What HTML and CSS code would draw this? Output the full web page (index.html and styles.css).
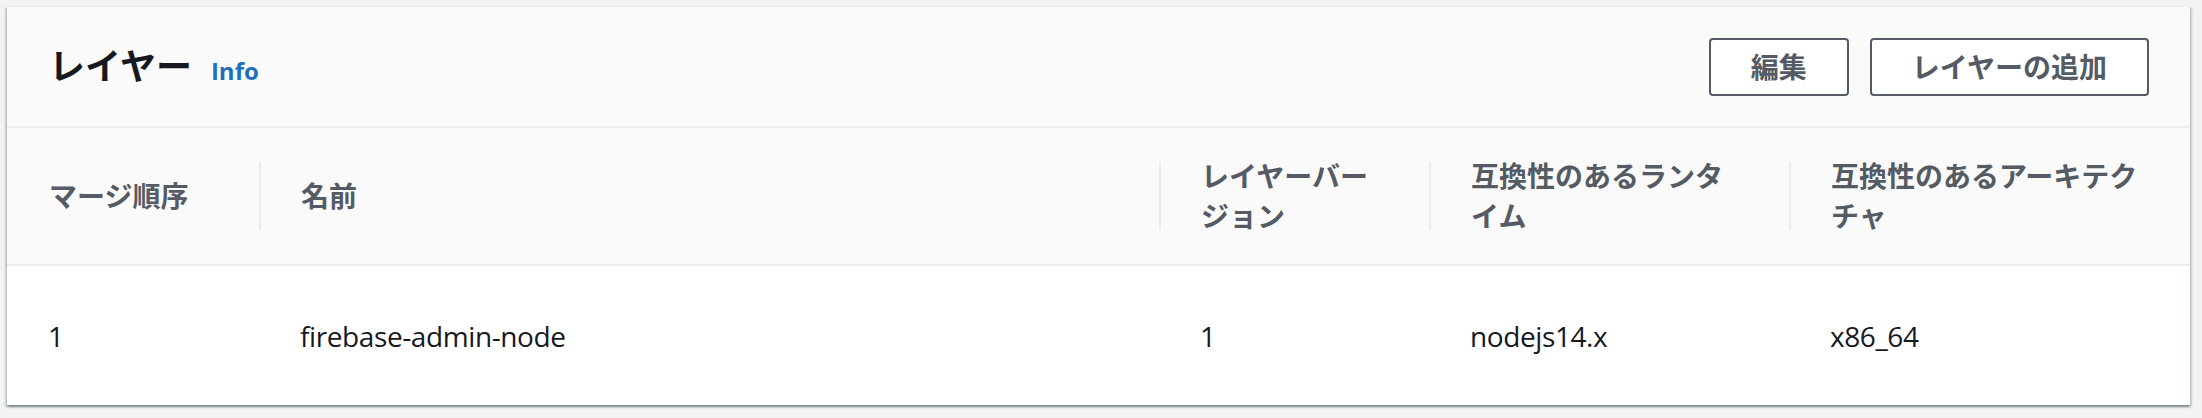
FILE: index.html
```html
<!DOCTYPE html>
<html>
  <head>
    <title>レイヤー</title>
    <meta charset="utf-8" />
    <link rel="stylesheet" href="styles.css">
  </head>
  <body>
    <div class="container">
      <div class="header">
        <div class="heading">
          <h2 class="title">レイヤー</h2>
          <a class="info" href="#">Info</a>
        </div>
        <div class="actions">
          <button class="btn">編集</button>
          <button class="btn">レイヤーの追加</button>
        </div>
      </div>
      <div class="row head">
        <div class="th">マージ順序</div>
        <div class="th">名前</div>
        <div class="th">レイヤーバージョン</div>
        <div class="th">互換性のあるランタイム</div>
        <div class="th">互換性のあるアーキテクチャ</div>
      </div>
      <div class="row body">
        <div class="td">1</div>
        <div class="td">firebase-admin-node</div>
        <div class="td">1</div>
        <div class="td">nodejs14.x</div>
        <div class="td">x86_64</div>
      </div>
    </div>
  </body>
</html>
```

FILE: styles.css
```css
body {margin: 0; padding: 6px 12px 11px 7px; background-color: #f2f3f3; font-family: "Open Sans", "Noto Sans CJK JP", sans-serif;}
.container {background-color: #fff; border-top: 1px solid #eaeded; box-shadow: 0 2px 2px 0 rgba(0, 28, 36, .3), 2px 2px 2px 0 rgba(0, 28, 36, .15), -2px 2px 2px 0 rgba(0, 28, 36, .15);}
.header {display: flex; align-items: center; justify-content: space-between; height: 119px; padding: 0 41px 0 42px; background-color: #fafafa; border-bottom: 2px solid #eaeded;}
.heading {display: flex; align-items: baseline;}
.title {margin: 0; font-size: 36px; line-height: 44px; font-weight: 700; color: #16191f;}
.info {margin-left: 19px; font-size: 24px; font-weight: 700; color: #1f6fbf; text-decoration: none;}
.actions {display: flex; gap: 21px;}
.btn {font-family: inherit; font-size: 28px; line-height: 40px; font-weight: 700; padding: 7px 40px; border: 2px solid #545b64; border-radius: 4px; background-color: #fff; color: #545b64;}
.row {display: grid; grid-template-columns: 252px 900px 270px 360px 1fr;}
.head {height: 136px; background-color: #fafafa; border-bottom: 2px solid #eaeded;}
.body {height: 139px;}
.th {display: flex; align-items: center; padding-right: 46px; font-size: 28px; line-height: 40px; font-weight: 700; color: #545b64;}
.th::before {content: ""; flex: none; width: 2px; height: 68px; margin-right: 40px; background-color: #eaeded;}
.th:first-child {padding-left: 42px;}
.th:first-child::before {display: none;}
.td {display: flex; align-items: center; padding-left: 41px; font-size: 28px; letter-spacing: -0.4px; color: #16191f;}
```
